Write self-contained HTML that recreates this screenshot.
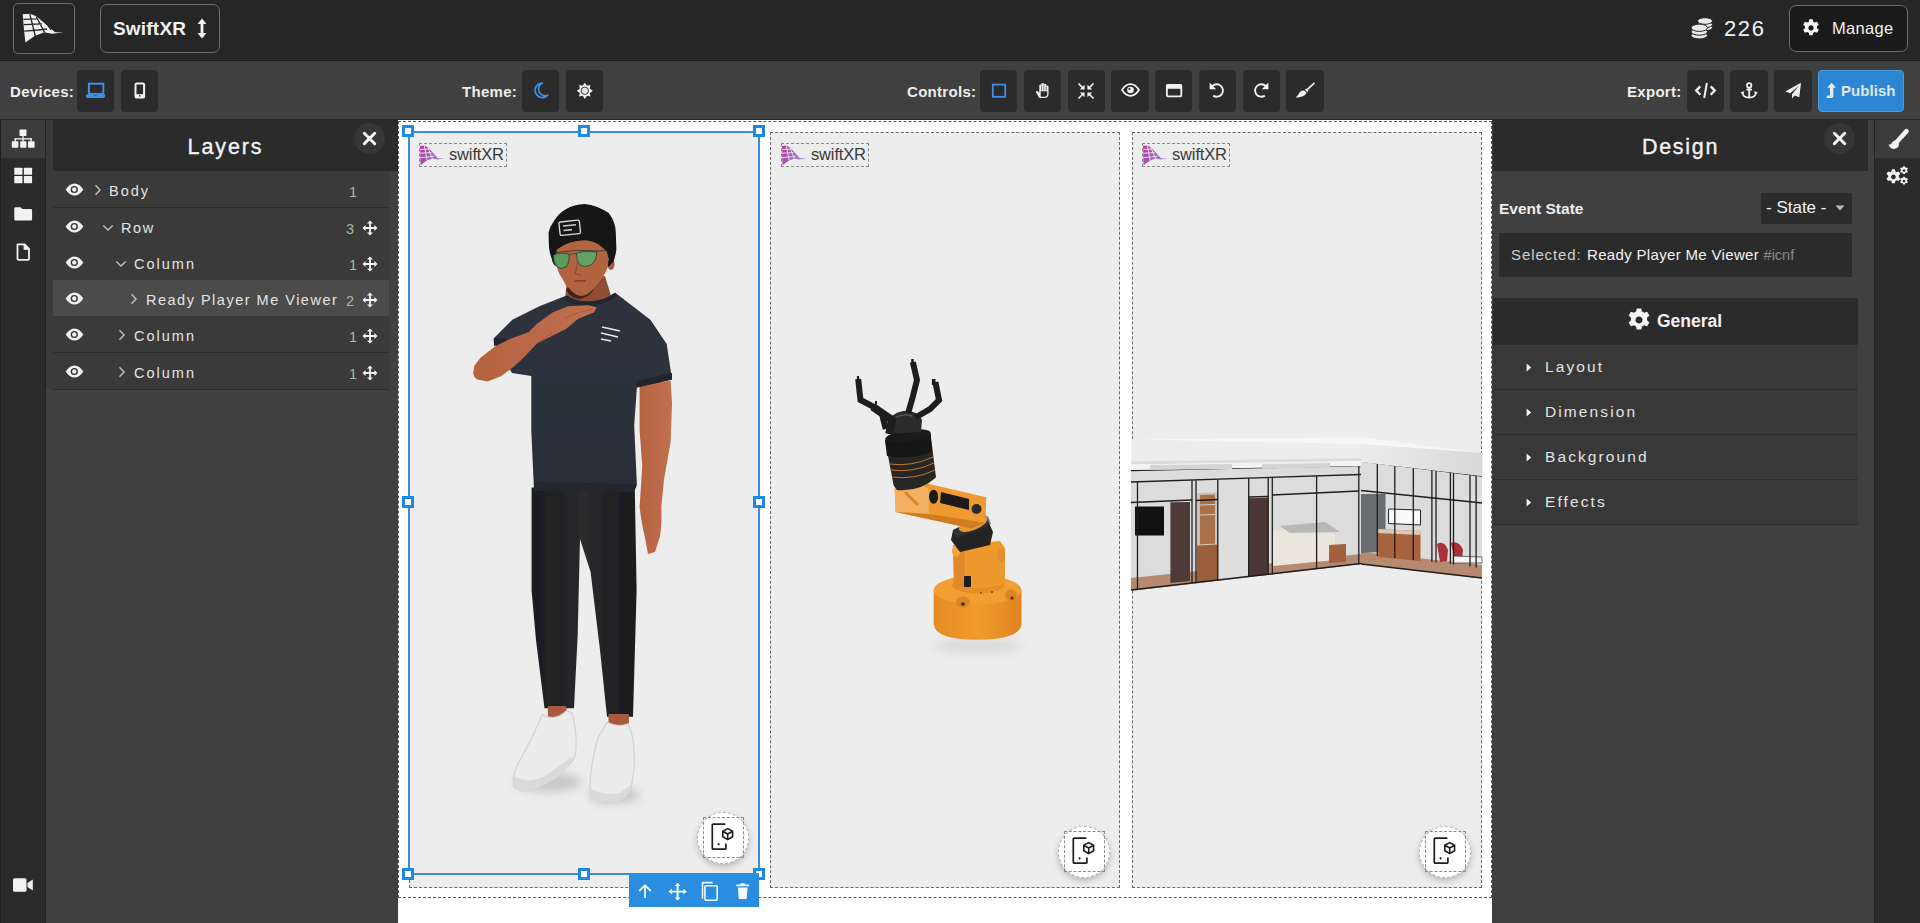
<!DOCTYPE html>
<html><head><meta charset="utf-8">
<style>
*{box-sizing:border-box;margin:0;padding:0}
html,body{width:1920px;height:923px;overflow:hidden;background:#404040;font-family:"Liberation Sans",sans-serif;color:#eee}
.a{position:absolute}
svg.a{overflow:visible}
#top{left:0;top:0;width:1920px;height:61px;background:#262626;border-bottom:1px solid #1c1c1c}
#tb{left:0;top:61px;width:1920px;height:58px;background:#404040}
.lbl{position:absolute;font-weight:bold;font-size:15px;color:#eee;top:82.5px;letter-spacing:0.3px}
.btn{position:absolute;top:70px;width:37px;height:42px;background:#2b2b2b;border-radius:4px}
#lsb{left:0;top:120px;width:46px;height:803px;background:#2b2b2b;border-right:1px solid #232323}
#lstrip{left:46px;top:120px;width:7px;height:269px;background:#3a3a3a}
#lp{left:53px;top:120px;width:345px;height:803px;background:transparent}
.ph{position:absolute;left:0;top:0;width:100%;height:51px;background:#2b2b2b}
.ph .t{position:absolute;top:15px;font-size:21.5px;letter-spacing:1.9px;color:#f4f4f4;width:100%;text-align:center;-webkit-text-stroke:0.35px #f4f4f4}
.close{position:absolute;width:31px;height:31px;border-radius:50%;background:#363636}
.row{position:absolute;left:0;width:336px;height:37px;background:#3a3a3a;border-bottom:1px solid #2d2d2d}
.row .n{position:absolute;top:11.5px;font-size:14.5px;letter-spacing:2px;color:#e4e4e4}
.row .c{position:absolute;top:12.5px;font-size:14.5px;color:#a3bf9a}
#canvas{left:398px;top:120px;width:1094px;height:803px;background:#fff}
#dp{left:1493px;top:120px;width:381px;height:803px;background:#404040}
#rsb{left:1874px;top:120px;width:46px;height:803px;background:#2b2b2b;border-left:1px solid #232323}
.drow{position:absolute;left:0;width:365px;height:45px;background:#383838;border-bottom:1px solid #2b2b2b}
.drow .n{position:absolute;left:52px;top:13px;font-size:15.5px;letter-spacing:2.1px;color:#e4e4e4}
.col{position:absolute;background:#ededed;border:1px dashed #6a6a6a}
.logo{position:absolute;left:9px;top:10px;width:88px;height:24px;border:1px dashed #888}
.logo .tx{position:absolute;left:30px;top:1px;font-size:17px;color:#333;letter-spacing:-0.2px}
.ar{position:absolute;width:50px;height:50px;border-radius:50%;background:#fff;box-shadow:0 2px 6px rgba(0,0,0,0.25)}
</style></head><body>
<!-- TOP BAR -->
<div id="top" class="a">
  <div class="a" style="left:13px;top:3px;width:62px;height:51px;border:1px solid #6e6e6e;border-radius:5px"></div>
  <svg class="a" style="left:0;top:0" width="80" height="60">
    <path d="M22.7 14.3 L30.2 13.7 L36.7 16.5 L48.6 26.7 L55.1 32.2 L63.3 32.4 L51.9 33.8 L44.3 32.2 L34.6 35.9 L25.4 42.4 L24 30 Z" fill="#f0f0f0"/>
    <path d="M29.7 13.7 L35.3 36 M36.2 16.5 L44.5 32.4 M23.5 19.3 L36.8 18.8 M23.8 24.7 L42 23.8 M24.2 31.2 L38 30 L47 29 M47 24 L51 30" stroke="#262626" stroke-width="1.3" fill="none"/>
  </svg>
  <div class="a" style="left:100px;top:4px;width:120px;height:49px;border:1px solid #6e6e6e;border-radius:7px"></div>
  <div class="a" style="left:113px;top:18px;font-weight:bold;font-size:19px;color:#f2f2f2;letter-spacing:0.2px">SwiftXR</div>
  <svg class="a" style="left:196px;top:18px" width="12" height="21" viewBox="0 0 12 21">
    <path d="M6 0.5 L10.5 6 L7.4 6 L7.4 15 L10.5 15 L6 20.5 L1.5 15 L4.6 15 L4.6 6 L1.5 6 Z" fill="#f2f2f2"/>
  </svg>
  <svg class="a" style="left:1690px;top:16px" width="24" height="24" viewBox="0 0 24 24">
    <g fill="#eaeaea" stroke="#262626" stroke-width="1">
      <ellipse cx="15" cy="11.5" rx="7.5" ry="3.2"/>
      <ellipse cx="15" cy="8.5" rx="7.5" ry="3.2"/>
      <ellipse cx="15" cy="5" rx="7.5" ry="3.3"/>
      <ellipse cx="9.3" cy="19.5" rx="8.2" ry="3.4"/>
      <ellipse cx="9.3" cy="15.8" rx="8.2" ry="3.4"/>
      <ellipse cx="9.3" cy="11.8" rx="8.2" ry="3.6"/>
    </g>
  </svg>
  <div class="a" style="left:1724px;top:16px;font-size:22px;letter-spacing:1.6px;color:#f2f2f2">226</div>
  <div class="a" style="left:1789px;top:5px;width:119px;height:47px;border:1px solid #6e6e6e;border-radius:7px;background:#1b1b1b"></div>
  <svg class="a" style="left:1802px;top:19px" width="18" height="18" viewBox="0 0 18 18">
    <path id="cog" d="M7.3 0.3h3.4l0.5 2.4a6.6 6.6 0 0 1 1.6 0.9l2.3-0.8 1.7 2.9-1.8 1.6a6.6 6.6 0 0 1 0 1.9l1.8 1.6-1.7 2.9-2.3-0.8a6.6 6.6 0 0 1-1.6 0.9l-0.5 2.4H7.3l-0.5-2.4a6.6 6.6 0 0 1-1.6-0.9l-2.3 0.8-1.7-2.9 1.8-1.6a6.6 6.6 0 0 1 0-1.9L1.2 5.7l1.7-2.9 2.3 0.8a6.6 6.6 0 0 1 1.6-0.9zM9 6.3a2.7 2.7 0 1 0 0.01 0z" fill="#f4f4f4" fill-rule="evenodd"/>
  </svg>
  <div class="a" style="left:1832px;top:19px;font-size:16.5px;color:#f2f2f2;letter-spacing:0.3px">Manage</div>
</div>
<!-- TOOLBAR -->
<div id="tb" class="a"></div>
<div class="lbl" style="left:10px">Devices:</div>
<div class="btn" style="left:77px"></div>
<svg class="a" style="left:85px;top:82px" width="21" height="17" viewBox="0 0 21 17">
  <rect x="3.9" y="1.7" width="14.4" height="10.2" fill="none" stroke="#3d8fe8" stroke-width="2"/>
  <path d="M1 12.6 H9 L9.6 13.4 H11.6 L12.2 12.6 H20 V14.5 Q20 15.9 18.6 15.9 H2.4 Q1 15.9 1 14.5Z" fill="#3d8fe8"/>
</svg>
<div class="btn" style="left:121px"></div>
<svg class="a" style="left:134px;top:82px" width="12" height="17" viewBox="0 0 12 17">
  <rect x="1.5" y="1.4" width="8.6" height="14.2" rx="1.2" fill="none" stroke="#f2f2f2" stroke-width="2"/>
  <rect x="1.5" y="12.2" width="8.6" height="3.4" fill="#f2f2f2"/>
  <circle cx="5.8" cy="13.9" r="0.8" fill="#2b2b2b"/>
</svg>
<div class="lbl" style="left:462px">Theme:</div>
<div class="btn" style="left:522px"></div>
<svg class="a" style="left:532px;top:81px" width="18" height="19" viewBox="0 0 18 19">
  <path d="M10.5 2 A7.3 7.3 0 1 0 15.8 14.2 A6 6 0 0 1 10.5 2 Z" fill="none" stroke="#3d8fe8" stroke-width="1.7" stroke-linejoin="round"/>
</svg>
<div class="btn" style="left:566px"></div>
<svg class="a" style="left:576px;top:82px" width="18" height="18" viewBox="0 0 18 18">
  <path d="M8.8 0.7 L10.9 3.8 L14.5 3.1 L13.8 6.7 L16.9 8.8 L13.8 10.9 L14.5 14.5 L10.9 13.8 L8.8 16.9 L6.7 13.8 L3.1 14.5 L3.8 10.9 L0.7 8.8 L3.8 6.7 L3.1 3.1 L6.7 3.8 Z" fill="#f2f2f2"/>
  <circle cx="8.8" cy="8.8" r="3.7" fill="#dde3ea" stroke="#3a3a3a" stroke-width="1"/>
</svg>
<div class="lbl" style="left:907px">Controls:</div>
<div class="btn" style="left:980px"></div>
<svg class="a" style="left:990px;top:82px" width="18" height="18"><rect x="2.8" y="2.6" width="12.4" height="12.2" fill="none" stroke="#3d8fe8" stroke-width="1.8"/></svg>
<div class="btn" style="left:1024px"></div>
<svg class="a" style="left:1034px;top:82px" width="18" height="18" viewBox="0 0 18 18">
  <path d="M5 15.5 L2.2 10.8 Q1.5 9.5 2.6 9 Q3.6 8.6 4.4 9.7 L5.3 10.9 V3.6 Q5.3 2.4 6.5 2.4 Q7.5 2.4 7.5 3.6 V2.2 Q7.5 1 8.7 1 Q9.9 1 9.9 2.2 V2.8 Q9.9 1.8 11 1.8 Q12.2 1.8 12.2 3 V4.4 Q12.2 3.4 13.3 3.4 Q14.5 3.4 14.5 4.6 V12 Q14.5 15.6 11.4 16 H6.2 Z" fill="#f2f2f2"/>
  <path d="M6.7 9.3 H13.2 V12.6 Q13.2 14.7 11.2 14.7 H6.8 L6.7 14.6Z" fill="#2b2b2b"/>
  <path d="M7.5 3.8V8.6 M9.9 3V8.6 M12.2 4.5V8.6" stroke="#2b2b2b" stroke-width="0.6"/>
</svg>
<div class="btn" style="left:1068px"></div>
<svg class="a" style="left:1077px;top:82px" width="18" height="18" viewBox="0 0 18 18">
  <g stroke="#f2f2f2" stroke-width="1.7" stroke-linecap="butt">
    <path d="M1.5 1.5 L6.5 6.5 M16.5 1.5 L11.5 6.5 M1.5 16.5 L6.5 11.5 M16.5 16.5 L11.5 11.5"/>
  </g>
  <g fill="#f2f2f2">
    <path d="M7.6 7.6 H2.8 L7.6 2.8Z M10.4 7.6 H15.2 L10.4 2.8Z M7.6 10.4 H2.8 L7.6 15.2Z M10.4 10.4 H15.2 L10.4 15.2Z"/>
  </g>
</svg>
<div class="btn" style="left:1111px;width:38px"></div>
<svg class="a" style="left:1121px;top:83px" width="19" height="14" viewBox="0 0 19 14">
  <path d="M1 7 Q4.8 1.2 9.5 1.2 Q14.2 1.2 18 7 Q14.2 12.8 9.5 12.8 Q4.8 12.8 1 7Z" fill="none" stroke="#f2f2f2" stroke-width="1.8"/>
  <circle cx="9.5" cy="7" r="3.3" fill="#f2f2f2"/>
  <circle cx="8.4" cy="6" r="1.1" fill="#2b2b2b"/>
</svg>
<div class="btn" style="left:1155px"></div>
<svg class="a" style="left:1165px;top:82px" width="18" height="17" viewBox="0 0 18 17">
  <rect x="1.9" y="2.8" width="14.4" height="11.5" rx="1" fill="none" stroke="#f2f2f2" stroke-width="1.8"/>
  <rect x="1.5" y="2.4" width="15.2" height="4.4" fill="#f2f2f2"/>
</svg>
<div class="btn" style="left:1199px"></div>
<svg class="a" style="left:1208px;top:81px" width="18" height="18" viewBox="0 0 18 18">
  <path d="M4.3 5.2 A6.2 6.2 0 1 1 5.2 14.6" fill="none" stroke="#f2f2f2" stroke-width="1.9"/>
  <path d="M1.6 1.6 V8.2 H8.2Z" fill="#f2f2f2"/>
</svg>
<div class="btn" style="left:1243px"></div>
<svg class="a" style="left:1252px;top:81px" width="18" height="18" viewBox="0 0 18 18">
  <path d="M13.7 5.2 A6.2 6.2 0 1 0 12.8 14.6" fill="none" stroke="#f2f2f2" stroke-width="1.9"/>
  <path d="M16.4 1.6 V8.2 H9.8Z" fill="#f2f2f2"/>
</svg>
<div class="btn" style="left:1286px;width:38px"></div>
<svg class="a" style="left:1295px;top:82px" width="20" height="17" viewBox="0 0 20 17">
  <path d="M19.5 0.8 L12.2 7.6" stroke="#f2f2f2" stroke-width="1.6"/>
  <path d="M11.2 6.4 L13.6 8.8 L12.3 10.1 L9.9 7.7Z" fill="#f2f2f2"/>
  <path d="M9.2 8.4 L11.6 10.8 Q9.5 15.5 0.6 15.6 Q3.2 13.8 4.5 10.6 Q5.8 8.2 9.2 8.4Z" fill="#f2f2f2"/>
</svg>
<div class="lbl" style="left:1627px">Export:</div>
<div class="btn" style="left:1687px"></div>
<svg class="a" style="left:1695px;top:82px" width="21" height="17" viewBox="0 0 21 17">
  <path d="M5.3 4.4 L1.2 8.6 L5.3 12.8" fill="none" stroke="#f2f2f2" stroke-width="2.3"/>
  <path d="M15.7 4.4 L19.8 8.6 L15.7 12.8" fill="none" stroke="#f2f2f2" stroke-width="2.3"/>
  <path d="M11.9 1 L9.2 16" stroke="#f2f2f2" stroke-width="2"/>
</svg>
<div class="btn" style="left:1730px;width:38px"></div>
<svg class="a" style="left:1740px;top:82px" width="19" height="17" viewBox="0 0 19 17">
  <circle cx="9.2" cy="3.4" r="2.2" fill="none" stroke="#f2f2f2" stroke-width="1.8"/>
  <path d="M9.2 5.5 V15.3 M6.4 7.6 H12" stroke="#f2f2f2" stroke-width="1.8"/>
  <path d="M2.4 10.5 Q3 15.6 9.2 15.6 Q15.4 15.6 16 10.5" fill="none" stroke="#f2f2f2" stroke-width="1.8"/>
  <path d="M0.5 10.3 L4.3 9.2 L3.2 12.9Z M17.9 10.3 L14.1 9.2 L15.2 12.9Z" fill="#f2f2f2"/>
</svg>
<div class="btn" style="left:1774px;width:38px"></div>
<svg class="a" style="left:1784px;top:82px" width="18" height="17" viewBox="0 0 18 17">
  <path d="M17 0.8 L1.2 9.5 L6.2 11.3 L15 3.4 L8 12.2 V16.4 L10.6 13.4 L15.3 15.3Z" fill="#f2f2f2"/>
</svg>
<div class="btn" style="left:1818px;width:86px;background:#2d86d4;border:1px solid #4a9de0"></div>
<svg class="a" style="left:1825px;top:82px" width="12" height="17" viewBox="0 0 12 17">
  <path d="M6.6 0.7 L11 5.8 H8.3 V14.2 Q8.3 16 6.5 16 H1.2 L2.6 13.4 H5 V5.8 H2.2Z" fill="#e6eef5"/>
</svg>
<div class="a" style="left:1841px;top:82px;font-weight:bold;font-size:15px;color:#dfe8f0;letter-spacing:0.05px">Publish</div>
<div class="a" style="left:0;top:119px;width:1920px;height:1px;background:#262626"></div>

<!-- LEFT SIDEBAR -->
<div id="lsb" class="a">
  <div class="a" style="left:0;top:0;width:45px;height:38px;background:#3b3b3b"></div>
  <svg class="a" style="left:0;top:0" width="45" height="150" viewBox="0 0 45 150">
    <g fill="#f2f2f2">
      <rect x="19.5" y="9.5" width="7" height="6.5" rx="0.8"/>
      <rect x="11.8" y="21.3" width="6.6" height="6.4" rx="0.8"/>
      <rect x="20.2" y="21.3" width="6.2" height="6.4" rx="0.8"/>
      <rect x="28" y="21.3" width="6.6" height="6.4" rx="0.8"/>
      <rect x="22.4" y="15.8" width="1.3" height="5.6"/>
      <rect x="14.6" y="18.2" width="17.2" height="1.3"/>
      <rect x="14.6" y="18.2" width="1.3" height="3.2"/>
      <rect x="30.5" y="18.2" width="1.3" height="3.2"/>
      <rect x="14.3" y="47.7" width="8.2" height="7.1" rx="0.6"/>
      <rect x="23.9" y="47.7" width="8.2" height="7.1" rx="0.6"/>
      <rect x="14.3" y="56.1" width="8.2" height="7.1" rx="0.6"/>
      <rect x="23.9" y="56.1" width="8.2" height="7.1" rx="0.6"/>
      <path d="M14.3 88.4 Q14.3 87.2 15.5 87.2 H20.6 L22.4 89 H30.9 Q32.1 89 32.1 90.2 V99.2 Q32.1 100.4 30.9 100.4 H15.5 Q14.3 100.4 14.3 99.2Z"/>
    </g>
    <path d="M17.5 124.4 H24.6 L29 128.8 V138.8 Q29 139.8 28 139.8 H18.5 Q17.5 139.8 17.5 138.8Z" fill="none" stroke="#f2f2f2" stroke-width="1.8" stroke-linejoin="round"/>
    <path d="M24.2 124.4 V129.2 H29" fill="#f2f2f2" stroke="#f2f2f2" stroke-width="1.2"/>
  </svg>
  <svg class="a" style="left:12px;top:757px" width="22" height="16" viewBox="0 0 22 16">
    <rect x="1" y="1.2" width="13.5" height="13.6" rx="1.6" fill="#f2f2f2"/>
    <path d="M15.5 6 L20.8 2.4 V13.6 L15.5 10Z" fill="#f2f2f2"/>
  </svg>
</div>
<div id="lstrip" class="a"></div>
<div class="a" style="left:0;top:120px;width:1px;height:803px;background:#1f1f1f"></div>
<div id="lp" class="a">
  <div class="ph"><div class="t" style="left:0">Layers</div>
    <div class="close" style="left:301px;top:3px"></div>
    <svg class="a" style="left:309px;top:11px" width="15" height="15" viewBox="0 0 15 15"><path d="M2.3 2.3 L12.7 12.7 M12.7 2.3 L2.3 12.7" stroke="#f6f6f6" stroke-width="3" stroke-linecap="round"/></svg>
  </div>
  <div class="row" style="top:51px"><svg class="a" style="left:12px;top:12px" width="19" height="13" viewBox="0 0 19 13"><path d="M0.7 6.5 Q4.5 0.4 9.5 0.4 Q14.5 0.4 18.3 6.5 Q14.5 12.6 9.5 12.6 Q4.5 12.6 0.7 6.5Z" fill="#f2f2f2"/><circle cx="9.3" cy="6.5" r="3.6" fill="#2f2f2f"/><circle cx="9.3" cy="6.5" r="2.2" fill="#f2f2f2"/></svg><svg class="a" style="left:40px;top:13px" width="10" height="12" viewBox="0 0 10 12"><path d="M2.5 1.3 L7 6 L2.5 10.7" fill="none" stroke="#bdbdbd" stroke-width="1.5"/></svg><span class="n" style="left:56px;letter-spacing:2.0px">Body</span><span class="c" style="left:296px">1</span></div>
  <div class="row" style="top:88px"><svg class="a" style="left:12px;top:12px" width="19" height="13" viewBox="0 0 19 13"><path d="M0.7 6.5 Q4.5 0.4 9.5 0.4 Q14.5 0.4 18.3 6.5 Q14.5 12.6 9.5 12.6 Q4.5 12.6 0.7 6.5Z" fill="#f2f2f2"/><circle cx="9.3" cy="6.5" r="3.6" fill="#2f2f2f"/><circle cx="9.3" cy="6.5" r="2.2" fill="#f2f2f2"/></svg><svg class="a" style="left:49px;top:15px" width="12" height="10" viewBox="0 0 12 10"><path d="M1.3 2.5 L6 7 L10.7 2.5" fill="none" stroke="#bdbdbd" stroke-width="1.5"/></svg><span class="n" style="left:68px;letter-spacing:1.6px">Row</span><span class="c" style="left:293px">3</span><svg class="a" style="left:309px;top:12px" width="16" height="16" viewBox="0 0 16 16"><path d="M8 0.5 L11 3.6 H8.9 V7.1 H12.4 V5 L15.5 8 L12.4 11 V8.9 H8.9 V12.4 H11 L8 15.5 L5 12.4 H7.1 V8.9 H3.6 V11 L0.5 8 L3.6 5 V7.1 H7.1 V3.6 H5Z" fill="#f2f2f2"/></svg></div>
  <div class="row" style="top:124px"><svg class="a" style="left:12px;top:12px" width="19" height="13" viewBox="0 0 19 13"><path d="M0.7 6.5 Q4.5 0.4 9.5 0.4 Q14.5 0.4 18.3 6.5 Q14.5 12.6 9.5 12.6 Q4.5 12.6 0.7 6.5Z" fill="#f2f2f2"/><circle cx="9.3" cy="6.5" r="3.6" fill="#2f2f2f"/><circle cx="9.3" cy="6.5" r="2.2" fill="#f2f2f2"/></svg><svg class="a" style="left:62px;top:15px" width="12" height="10" viewBox="0 0 12 10"><path d="M1.3 2.5 L6 7 L10.7 2.5" fill="none" stroke="#bdbdbd" stroke-width="1.5"/></svg><span class="n" style="left:81px;letter-spacing:2.0px">Column</span><span class="c" style="left:296px">1</span><svg class="a" style="left:309px;top:12px" width="16" height="16" viewBox="0 0 16 16"><path d="M8 0.5 L11 3.6 H8.9 V7.1 H12.4 V5 L15.5 8 L12.4 11 V8.9 H8.9 V12.4 H11 L8 15.5 L5 12.4 H7.1 V8.9 H3.6 V11 L0.5 8 L3.6 5 V7.1 H7.1 V3.6 H5Z" fill="#f2f2f2"/></svg></div>
  <div class="row" style="top:160px;background:#4b4b4b"><svg class="a" style="left:12px;top:12px" width="19" height="13" viewBox="0 0 19 13"><path d="M0.7 6.5 Q4.5 0.4 9.5 0.4 Q14.5 0.4 18.3 6.5 Q14.5 12.6 9.5 12.6 Q4.5 12.6 0.7 6.5Z" fill="#f2f2f2"/><circle cx="9.3" cy="6.5" r="3.6" fill="#2f2f2f"/><circle cx="9.3" cy="6.5" r="2.2" fill="#f2f2f2"/></svg><svg class="a" style="left:76px;top:13px" width="10" height="12" viewBox="0 0 10 12"><path d="M2.5 1.3 L7 6 L2.5 10.7" fill="none" stroke="#bdbdbd" stroke-width="1.5"/></svg><span class="n" style="left:93px;letter-spacing:1.5px">Ready Player Me Viewer</span><span class="c" style="left:293px">2</span><svg class="a" style="left:309px;top:12px" width="16" height="16" viewBox="0 0 16 16"><path d="M8 0.5 L11 3.6 H8.9 V7.1 H12.4 V5 L15.5 8 L12.4 11 V8.9 H8.9 V12.4 H11 L8 15.5 L5 12.4 H7.1 V8.9 H3.6 V11 L0.5 8 L3.6 5 V7.1 H7.1 V3.6 H5Z" fill="#f2f2f2"/></svg></div>
  <div class="row" style="top:196px"><svg class="a" style="left:12px;top:12px" width="19" height="13" viewBox="0 0 19 13"><path d="M0.7 6.5 Q4.5 0.4 9.5 0.4 Q14.5 0.4 18.3 6.5 Q14.5 12.6 9.5 12.6 Q4.5 12.6 0.7 6.5Z" fill="#f2f2f2"/><circle cx="9.3" cy="6.5" r="3.6" fill="#2f2f2f"/><circle cx="9.3" cy="6.5" r="2.2" fill="#f2f2f2"/></svg><svg class="a" style="left:64px;top:13px" width="10" height="12" viewBox="0 0 10 12"><path d="M2.5 1.3 L7 6 L2.5 10.7" fill="none" stroke="#bdbdbd" stroke-width="1.5"/></svg><span class="n" style="left:81px;letter-spacing:2.0px">Column</span><span class="c" style="left:296px">1</span><svg class="a" style="left:309px;top:12px" width="16" height="16" viewBox="0 0 16 16"><path d="M8 0.5 L11 3.6 H8.9 V7.1 H12.4 V5 L15.5 8 L12.4 11 V8.9 H8.9 V12.4 H11 L8 15.5 L5 12.4 H7.1 V8.9 H3.6 V11 L0.5 8 L3.6 5 V7.1 H7.1 V3.6 H5Z" fill="#f2f2f2"/></svg></div>
  <div class="row" style="top:233px"><svg class="a" style="left:12px;top:12px" width="19" height="13" viewBox="0 0 19 13"><path d="M0.7 6.5 Q4.5 0.4 9.5 0.4 Q14.5 0.4 18.3 6.5 Q14.5 12.6 9.5 12.6 Q4.5 12.6 0.7 6.5Z" fill="#f2f2f2"/><circle cx="9.3" cy="6.5" r="3.6" fill="#2f2f2f"/><circle cx="9.3" cy="6.5" r="2.2" fill="#f2f2f2"/></svg><svg class="a" style="left:64px;top:13px" width="10" height="12" viewBox="0 0 10 12"><path d="M2.5 1.3 L7 6 L2.5 10.7" fill="none" stroke="#bdbdbd" stroke-width="1.5"/></svg><span class="n" style="left:81px;letter-spacing:2.0px">Column</span><span class="c" style="left:296px">1</span><svg class="a" style="left:309px;top:12px" width="16" height="16" viewBox="0 0 16 16"><path d="M8 0.5 L11 3.6 H8.9 V7.1 H12.4 V5 L15.5 8 L12.4 11 V8.9 H8.9 V12.4 H11 L8 15.5 L5 12.4 H7.1 V8.9 H3.6 V11 L0.5 8 L3.6 5 V7.1 H7.1 V3.6 H5Z" fill="#f2f2f2"/></svg></div>
</div>

<!-- CANVAS -->
<div id="canvas" class="a"></div>
<div class="a" style="left:398px;top:121px;width:1094px;height:777px;border:1px dashed #5a5a5a"></div>
<div class="col" style="left:409px;top:132px;width:350px;height:756px"></div>
<div class="col" style="left:770px;top:132px;width:350px;height:756px"></div>
<div class="col" style="left:1132px;top:132px;width:350px;height:756px"></div>
<div class="a" style="left:419px;top:143px;width:88px;height:24px;border:1px dashed #8a8a8a"></div>
<svg class="a" style="left:419px;top:143px" width="30" height="24" viewBox="0 0 30 24">
  <defs><linearGradient id="lg419" x1="0" y1="0" x2="1" y2="0.3"><stop offset="0" stop-color="#b8389a"/><stop offset="0.45" stop-color="#a45ab8"/><stop offset="1" stop-color="#8f8fd0"/></linearGradient></defs>
  <path d="M1 3 L5.5 2.6 L9 4.6 L15.5 11.6 L19 15.2 L26 15.6 L18.5 16.4 L13.5 15.6 L8 17.4 L1.5 22.2 Z" fill="url(#lg419)"/>
  <path d="M5.3 2.6 L8.2 17.6 M9 4.6 L13.4 15.8 M1.2 6.4 L9.8 6.1 M1.3 10.2 L12.6 9.6 M1.4 14.6 L9.8 13.8 L15 13.2" stroke="#f3e6f2" stroke-width="0.9" fill="none"/>
</svg>
<div class="a" style="left:449px;top:145px;font-size:16.5px;color:#3a3a3a;letter-spacing:-0.15px">swiftXR</div>
<div class="a" style="left:781px;top:143px;width:88px;height:24px;border:1px dashed #8a8a8a"></div>
<svg class="a" style="left:781px;top:143px" width="30" height="24" viewBox="0 0 30 24">
  <defs><linearGradient id="lg781" x1="0" y1="0" x2="1" y2="0.3"><stop offset="0" stop-color="#b8389a"/><stop offset="0.45" stop-color="#a45ab8"/><stop offset="1" stop-color="#8f8fd0"/></linearGradient></defs>
  <path d="M1 3 L5.5 2.6 L9 4.6 L15.5 11.6 L19 15.2 L26 15.6 L18.5 16.4 L13.5 15.6 L8 17.4 L1.5 22.2 Z" fill="url(#lg781)"/>
  <path d="M5.3 2.6 L8.2 17.6 M9 4.6 L13.4 15.8 M1.2 6.4 L9.8 6.1 M1.3 10.2 L12.6 9.6 M1.4 14.6 L9.8 13.8 L15 13.2" stroke="#f3e6f2" stroke-width="0.9" fill="none"/>
</svg>
<div class="a" style="left:811px;top:145px;font-size:16.5px;color:#3a3a3a;letter-spacing:-0.15px">swiftXR</div>
<div class="a" style="left:1142px;top:143px;width:88px;height:24px;border:1px dashed #8a8a8a"></div>
<svg class="a" style="left:1142px;top:143px" width="30" height="24" viewBox="0 0 30 24">
  <defs><linearGradient id="lg1142" x1="0" y1="0" x2="1" y2="0.3"><stop offset="0" stop-color="#b8389a"/><stop offset="0.45" stop-color="#a45ab8"/><stop offset="1" stop-color="#8f8fd0"/></linearGradient></defs>
  <path d="M1 3 L5.5 2.6 L9 4.6 L15.5 11.6 L19 15.2 L26 15.6 L18.5 16.4 L13.5 15.6 L8 17.4 L1.5 22.2 Z" fill="url(#lg1142)"/>
  <path d="M5.3 2.6 L8.2 17.6 M9 4.6 L13.4 15.8 M1.2 6.4 L9.8 6.1 M1.3 10.2 L12.6 9.6 M1.4 14.6 L9.8 13.8 L15 13.2" stroke="#f3e6f2" stroke-width="0.9" fill="none"/>
</svg>
<div class="a" style="left:1172px;top:145px;font-size:16.5px;color:#3a3a3a;letter-spacing:-0.15px">swiftXR</div>
<!--MODELS-->
<svg class="a" style="left:398px;top:120px" width="1094" height="803" viewBox="398 120 1094 803">
<defs>
  <filter id="blur4" x="-50%" y="-50%" width="200%" height="200%"><feGaussianBlur stdDeviation="5"/></filter>
  <filter id="blur2" x="-50%" y="-50%" width="200%" height="200%"><feGaussianBlur stdDeviation="1.2"/></filter>
  <filter id="blur1" x="-20%" y="-20%" width="140%" height="140%"><feGaussianBlur stdDeviation="0.6"/></filter>
  <linearGradient id="skin" x1="0" y1="0" x2="1" y2="0"><stop offset="0" stop-color="#b5623f"/><stop offset="1" stop-color="#c07050"/></linearGradient>
  <linearGradient id="pants" x1="0" y1="0" x2="1" y2="0"><stop offset="0" stop-color="#1c1c1e"/><stop offset="0.5" stop-color="#2a2a2c"/><stop offset="1" stop-color="#1a1a1c"/></linearGradient>
  <linearGradient id="shirt" x1="0" y1="0" x2="0" y2="1"><stop offset="0" stop-color="#2e333e"/><stop offset="1" stop-color="#2a2e38"/></linearGradient>
  <linearGradient id="orange" x1="0" y1="0" x2="1" y2="0"><stop offset="0" stop-color="#e48a22"/><stop offset="0.5" stop-color="#f09c2c"/><stop offset="1" stop-color="#e08420"/></linearGradient>
  <linearGradient id="roofR" x1="0" y1="0" x2="1" y2="0"><stop offset="0" stop-color="#ececec"/><stop offset="1" stop-color="#d8d8d8"/></linearGradient>
</defs>
<g id="avatar">
  <!-- right arm -->
  <path d="M636.9 384.8 L670.7 380.7 L672 403.8 L670.7 441.7 L664 479.6 L661.3 506.7 Q662 525 660 536 L655 552 L648 554 L645 538 Q641 520 639.6 506.7 L642.3 466 L639.6 430.8 L639.6 387.5Z" fill="url(#skin)" filter="url(#blur1)"/>
  <!-- pants -->
  <path d="M531.6 487.4 L634.8 489.2 L636.6 590.6 L633 716.8 L607 716.8 L600 650 L590.6 572 L580 539 L577.7 634.8 L574 708.3 L544.5 708.3 L536 640 L531.6 590.6Z" fill="url(#pants)" filter="url(#blur1)"/>
  <ellipse cx="548" cy="782" rx="34" ry="10" fill="#b0b0b0" opacity="0.6" filter="url(#blur4)"/>
  <ellipse cx="614" cy="795" rx="26" ry="9" fill="#b0b0b0" opacity="0.6" filter="url(#blur4)"/>
  <path d="M547.9 706 L566.2 706 L568 722.4 L547.9 722.4Z" fill="#a85a3a"/>
  <path d="M608.5 714 L628.9 714 L628.9 726.6 L608.5 726.6Z" fill="#a85a3a"/>
  <!-- shoes -->
  <path d="M542.3 714.6 Q555 722 566.2 711 L571.8 712.5 Q577 730 576 749.2 Q575.5 756 573.2 760.4 L560.6 774.5 Q548 783 532.4 790 Q524 792 518.3 790 Q512 786 513.4 780 Q514 772 517 766 L532.4 736.5Z" fill="#ebebeb" stroke="#d2d2d2" stroke-width="1.2" filter="url(#blur1)"/>
  <path d="M515 777 Q528 784 545 776 L572 757 L573.2 760.4 L560.6 774.5 Q548 783 532.4 790 Q524 792 518.3 790 Q512 786 513.4 780Z" fill="#dadada"/>
  <path d="M607 722.4 Q618 728 628.2 723.8 Q633 735 633.8 746.3 L634.5 763.2 Q633 778 631 788.6 Q627 797 619.7 801.3 L598.6 802.7 Q592 799 590.1 794.2 Q589.5 780 591.5 768.9 Q594 750 598.6 736.5Z" fill="#ececec" stroke="#d2d2d2" stroke-width="1.2" filter="url(#blur1)"/>
  <path d="M590.5 788 Q604 796 620 793 L632 784 L631 788.6 Q627 797 619.7 801.3 L598.6 802.7 Q592 799 590.1 794.2Z" fill="#dadada"/>
  <!-- neck -->
  <path d="M567 280 L605 276 L611 296 L588 304 L565 300Z" fill="#8f4d33"/>
  <!-- head -->
  <path d="M556.2 245 L557.4 268.9 Q559 274 562.2 278.4 L568.1 289.2 Q571 294 574.1 295.1 L581.3 296.3 Q587 295 592 290.4 L600.3 280.8 L606.3 271.3 L608.7 261.7 L607 240 L583 234 L560 238Z" fill="#b3633f" filter="url(#blur1)"/>
  <path d="M568 287 Q575 296 582 296 Q589 295 594 288 L592 292 Q586 299 578 299 Q570 297 566 290Z" fill="#3d251c"/>
  <path d="M574 281.5 Q580 280 586 281" stroke="#7a3a2a" stroke-width="1.3" fill="none"/>
  <path d="M578 262 L575 274 L581 275" stroke="#8a4a32" stroke-width="1" fill="none"/>
  <ellipse cx="611" cy="264" rx="3.5" ry="6" fill="#a85a3a"/>
  <!-- beanie -->
  <path d="M584.8 203.9 Q596.7 205.1 608.7 212.9 Q615.8 222 615.8 233.1 L616.4 249.8 Q615 258 613.4 261.7 L607.5 267.7 L608.7 259.4 Q608 254 606.3 251 Q601 246 598 243.9 Q590 240 583.6 240.3 Q575 241 569.3 242.7 Q561 246 556.8 249.8 L555.6 266.5 Q552 262 552 259.4 Q549.5 253 549 247.4 L548.5 233.1 Q550 226 553.8 221.2 Q559 213 565.8 209.3 Q574 204 584.8 203.9Z" fill="#141414" filter="url(#blur1)"/>
  <rect x="559.5" y="221" width="20.5" height="13.5" rx="1.5" fill="none" stroke="#dcdcdc" stroke-width="1.3" transform="rotate(-6 570 228)"/>
  <path d="M563 226 L576 224.8 M563.5 230.5 L572 229.6" stroke="#c8c8c8" stroke-width="1.6"/>
  <!-- glasses -->
  <path d="M553.5 255 Q560 252 569 254 Q570 262 566 267 Q561 270 557 267 Q553 262 553.5 255Z" fill="#5d9a5e" stroke="#2c3a2c" stroke-width="0.8"/>
  <path d="M576.5 253 Q586 250 596.5 252 Q597 260 591 265 Q585 268 580 265 Q576 260 576.5 253Z" fill="#64a264" stroke="#2c3a2c" stroke-width="0.8"/>
  <path d="M556 252.5 Q577 249 600 251 L606.3 250.5 M569 255 Q573 253 576.5 254" stroke="#3a3a3a" stroke-width="0.9" fill="none"/>
  <!-- shirt -->
  <path d="M566.5 295.4 Q590 309 615.2 292.7 L650.4 319.8 L666.7 344 L672 379.4 L636.9 387.5 L634.2 425.4 L636.9 485 L634.2 491.8 L534 490.4 L531.3 430.8 L531.3 376 L512 373 L494 343 L493.8 338.2 L512.3 319.8 L539.4 306.3Z" fill="url(#shirt)" filter="url(#blur1)"/>
  <path d="M566.5 295.4 Q590 309 615.2 292.7 L618 296 Q590 314 563 299Z" fill="#23272f"/>
  <path d="M534 482 L636 484 L634.2 491.8 L534 490.4Z" fill="#23262e"/>
  <path d="M636.9 381 L672 373 L672 379.4 L636.9 387.5Z" fill="#22252c"/>
  <path d="M493.8 338.2 L505 338 L509 341 L494 346Z" fill="#22252c"/>
  <!-- raised arm -->
  <path d="M473.2 373.2 Q474 378 477.4 379.4 L487.6 381.5 L501 376.3 L513.4 367 L522.6 358.8 L537 343.4 L549.4 337.2 L565.9 329 L578.2 318.7 L593.7 312.5 L596.8 307.4 L588.5 305.3 L568 306.3 L552.5 312.5 L537 323.8 L528.8 332.1 L509.3 339.3 L494.9 346.5 L480.4 357.8 L474.3 366Z" fill="url(#skin)" filter="url(#blur1)"/>
  <path d="M537 343.4 Q545 338 552 333 M565 318 Q578 312 592 309" stroke="#8a4530" stroke-width="0.9" fill="none" opacity="0.5"/>
  <!-- shirt logo -->
  <g fill="none" stroke="#e8e8e8" stroke-width="1.6">
    <path d="M602 327 L620 331 M601 333 L618 337 M601 339 L611 341"/>
  </g>
</g>
<g id="robot">
  <ellipse cx="978" cy="646" rx="44" ry="7" fill="#c0c0c0" opacity="0.45" filter="url(#blur4)"/>
  <!-- base -->
  <path d="M933.7 590 L933.7 624 Q935 639.8 977.6 639.8 Q1020 639.8 1021.5 624 L1021.5 590Z" fill="url(#orange)"/>
  <ellipse cx="977.6" cy="590" rx="43.9" ry="14.6" fill="#f0a032"/>
  <ellipse cx="978" cy="585" rx="26" ry="8.5" fill="#e48e24"/>
  <ellipse cx="963" cy="602" rx="6.9" ry="5.4" fill="#d98524"/>
  <circle cx="963" cy="604" r="1.8" fill="#3a2510"/>
  <ellipse cx="1010.8" cy="595" rx="5.8" ry="5.8" fill="#d98524"/>
  <circle cx="1012" cy="598" r="1.5" fill="#3a2510"/>
  <circle cx="981" cy="593" r="1" fill="#7a4a18"/><circle cx="992" cy="592" r="1" fill="#7a4a18"/>
  <!-- pillar -->
  <path d="M953 545 L1000 541 L1005 548 L1005 583 Q980 592 954 585Z" fill="#ec9a2c"/>
  <path d="M953 545 L965 552 L965 588 Q958 587 954 585Z" fill="#e0892a"/>
  <ellipse cx="956" cy="551" rx="4" ry="6" fill="#f0a540"/>
  <ellipse cx="1001" cy="555" rx="4" ry="7" fill="#e38f2c"/>
  <rect x="964" y="576" width="7" height="11" rx="1" fill="#1e1e1e"/>
  <!-- elbow joint -->
  <path d="M953 530 L985 514 L993 532 L990 545 L960 552 L951 540Z" fill="#232323"/>
  <path d="M953 531 Q972 524 988 516 L991 524 Q975 532 956 538Z" fill="#3a3a3a" opacity="0.6"/>
  <ellipse cx="973" cy="524" rx="15" ry="6" transform="rotate(-22 973 524)" fill="#e99a38"/>
  <!-- upper arm -->
  <path d="M915.1 480.7 L986.3 497.3 L985.4 522.7 L971.7 528.5 L895.6 512 L894.6 488.5Z" fill="#ee9a30"/>
  <path d="M894.6 488.5 L915.1 480.7 L928.8 489 L928.8 513.9 L895.6 512Z" fill="#f3b060"/>
  <path d="M895.6 512 L971.7 528.5 L985.4 522.7 L928.8 513.9Z" fill="#d27c22"/>
  <path d="M941 492 L969 499 L969 510 L940 503Z" fill="#1b1b1b"/>
  <ellipse cx="933.6" cy="496.7" rx="4.6" ry="7" fill="#1b1b1b"/>
  <circle cx="976.5" cy="509" r="5" fill="#2a2a2a"/>
  <path d="M905 492 L918 505" stroke="#d88628" stroke-width="2.5"/>
  <!-- wrist cylinder -->
  <path d="M885 440 L930.6 434 L936 477.5 Q920 492 896.8 490 L893.7 485.4Z" fill="#262626"/>
  <path d="M885 440 L930.6 434 L932 452 Q910 460 887 456Z" fill="#161616"/>
  <ellipse cx="908" cy="436" rx="23" ry="6" transform="rotate(-8 908 436)" fill="#1a1a1a"/>
  <path d="M889 464 Q912 467 933 457 M890 470 Q913 473 934 463 M892 477 Q914 480 935 470" stroke="#c8752a" stroke-width="1" fill="none"/>
  <!-- gripper -->
  <path d="M887 425 Q890 413 903 411 Q918 410 922 420 L921 432 L888 434Z" fill="#2b2b2b"/>
  <path d="M895 418 Q903 413 912 416" stroke="#5a5a5a" stroke-width="1.4" fill="none"/>
  <g stroke="#1d1d1d" stroke-linecap="square" stroke-linejoin="miter" fill="none">
    <path d="M858.5 382 L860.5 400 L874 407 L882 414 L885 426" stroke-width="6"/>
    <path d="M913.5 365 L917 380 L913 396 L909 410" stroke-width="6"/>
    <path d="M936 385 L939 400 L930 409 L918 416" stroke-width="6"/>
    <path d="M876 409 L892 420 L890 430" stroke-width="8"/>
  </g>
  <g stroke="#1d1d1d" stroke-width="2" fill="none">
    <path d="M858 376 V383 M912.5 359 V366 M934.5 379 V386 M876 401 V407"/>
  </g>
</g>
  <g stroke="#1c1c1c" stroke-width="2.2" fill="none">
    <path d="M858 377 V384 M912.5 359 V366 M933 379 V385"/>
  </g>
</g>
<g id="building">
  <!-- below-floor white is bg; walls -->
  <path d="M1131 464 L1361 459 L1482 474.5 L1482 578.5 L1361 564 L1131 591Z" fill="#dcdcdd"/>
  <!-- floor strips -->
  <path d="M1131 578 L1361 554 L1361 564 L1131 591Z" fill="#b58a70"/>
  <path d="M1361 552 L1482 565 L1482 578.5 L1361 564Z" fill="#b58a70"/>
  <!-- left facade interior -->
  <rect x="1135" y="506.5" width="29" height="29" fill="#111"/>
  <path d="M1170.4 502.3 L1190 502 L1190 581 L1170.4 583Z" fill="#4e3a36"/>
  <path d="M1197 493 L1218 492.5 L1218 580 L1197 582.5Z" fill="#c9c2bc"/><path d="M1200 495 L1215 494.5 L1215 545 L1200 546Z" fill="#a8714a"/><path d="M1197 545 L1218 544 L1218 580 L1197 582.5Z" fill="#9b5f3c"/>
  <path d="M1200 505 L1215 504.5 M1200 515 L1215 514.5 M1197 545 L1218 544" stroke="#d8ccc0" stroke-width="1"/>
  <path d="M1218 473.5 L1248.7 472.8 L1248.7 577 L1218 580.6Z" fill="#dedede"/>
  <path d="M1248.7 498.2 L1268.2 497.8 L1268.2 575 L1248.7 576.4Z" fill="#4b3733"/>
  <path d="M1273 531 L1300 528 L1335 534 L1335 560 L1273 566Z" fill="#ebe6dc"/>
  <path d="M1280 526 L1325 522 L1340 532 L1290 533Z" fill="#b8b8b8"/>
  <path d="M1329 545 L1346 544 L1346 562 L1329 563Z" fill="#a0613c"/>
  <!-- right facade interior -->
  <path d="M1361 494 L1385.5 494 L1385.5 551.7 L1361 553Z" fill="#6a6d70"/>
  <path d="M1388.6 509 L1420.5 510 L1420.5 525 L1388.6 523.5Z" fill="#fafafa" stroke="#222" stroke-width="1"/>
  <path d="M1378.3 529 L1420.5 531 L1420.5 561 L1378.3 557Z" fill="#a9623e"/>
  <path d="M1378.3 529 L1420.5 531 L1420.5 535 L1378.3 533Z" fill="#d8c8b8"/>
  <path d="M1437 544 Q1444 540 1448 550 L1447 561 L1440 562Z M1451 543 Q1459 540 1463 550 L1462 560 L1455 561Z" fill="#a8323c"/>
  <path d="M1453.5 556 L1482 557 L1482 563 L1453.5 563Z" fill="#f4f4f4" stroke="#333" stroke-width="0.7"/>
  <!-- frames left -->
  <g stroke="#1e1e1e" stroke-width="1.3" fill="none">
    <path d="M1131 470.5 L1361 465.5"/>
    <path d="M1131 482 L1361 474.5"/>
    <path d="M1131 502.5 L1192 500 M1196 500.5 L1218 499.5 M1248.7 497 L1268.2 496.5 M1272 495 L1359 491"/>
    <path d="M1137.5 482 V590 M1192 480.5 V583 M1196 480.5 V583 M1217.8 480 V581 M1248.7 478 V577 M1268.2 477.5 V575 M1272.3 477 V574.5 M1316.6 476 V569 M1358.8 459 V564.5"/>
    <path d="M1131 590 L1361 563.5"/>
  </g>
  <g stroke="#1e1e1e" stroke-width="1.3" fill="none">
    <path d="M1361 461 L1482 476"/>
    <path d="M1361 490.5 L1482 503"/>
    <path d="M1377.3 461 V556 M1394.8 463 V558 M1413.3 465.5 V560 M1431.9 468 V562 M1436 468.5 V562.5 M1450.4 470 V564 M1453.5 470.5 V564.5 M1470 472.5 V566.5 M1476.1 473.5 V567.5"/>
    <path d="M1361 564 L1482 578"/>
  </g>
  <!-- roof -->
  <path d="M1131.3 439.6 L1362.9 437.5 L1482.3 452.9 L1482.3 476 L1360.8 462 L1131.3 466Z" fill="#ededed"/>
  <path d="M1131.3 439.6 L1362.9 437.5 L1482.3 452.9 L1360.8 444 Z" fill="#f6f6f6"/>
  <path d="M1360.8 444 L1482.3 452.9 L1482.3 476 L1360.8 461Z" fill="url(#roofR)"/>
  <path d="M1131 461.5 L1361 458 L1361 461 L1131 464.5Z" fill="#dcdcdc"/>
  <path d="M1131 464.5 L1361 461 L1361 466 L1131 470Z" fill="#f4f4f4"/>
  <path d="M1150 465 L1232 464 L1232 469 L1150 470Z" fill="#d4d4d4"/>
  <path d="M1262 464 L1330 463 L1330 467.5 L1262 468.5Z" fill="#d4d4d4"/>
</g>
</svg>

<!--/MODELS-->
<div class="a" style="left:697px;top:812px;width:52px;height:52px;border-radius:50%;background:#fff;box-shadow:0 3px 6px rgba(0,0,0,0.22);border:1px dashed #b0b0b0"></div>
<div class="a" style="left:703px;top:817px;width:41px;height:41px;border:1px dashed #8c8c8c"></div>
<svg class="a" style="left:711px;top:823px" width="24" height="28" viewBox="0 0 24 28">
  <path d="M14.4 1.2 H2.3 Q1.3 1.2 1.3 2.2 V25.2 Q1.3 26.2 2.3 26.2 H13.9 Q14.9 26.2 14.9 25.2 V20.5" fill="none" stroke="#1e1e1e" stroke-width="1.7"/>
  <circle cx="7.6" cy="21.3" r="1.1" fill="#1e1e1e"/>
  <path d="M16.7 5.6 L21.6 8.3 V13.8 L16.7 16.6 L11.8 13.8 V8.3 Z M11.8 8.3 L16.7 11 L21.6 8.3 M16.7 11 V16.6" fill="none" stroke="#1e1e1e" stroke-width="1.6" stroke-linejoin="round"/>
</svg>
<div class="a" style="left:1058px;top:826px;width:52px;height:52px;border-radius:50%;background:#fff;box-shadow:0 3px 6px rgba(0,0,0,0.22);border:1px dashed #b0b0b0"></div>
<div class="a" style="left:1064px;top:831px;width:41px;height:41px;border:1px dashed #8c8c8c"></div>
<svg class="a" style="left:1072px;top:837px" width="24" height="28" viewBox="0 0 24 28">
  <path d="M14.4 1.2 H2.3 Q1.3 1.2 1.3 2.2 V25.2 Q1.3 26.2 2.3 26.2 H13.9 Q14.9 26.2 14.9 25.2 V20.5" fill="none" stroke="#1e1e1e" stroke-width="1.7"/>
  <circle cx="7.6" cy="21.3" r="1.1" fill="#1e1e1e"/>
  <path d="M16.7 5.6 L21.6 8.3 V13.8 L16.7 16.6 L11.8 13.8 V8.3 Z M11.8 8.3 L16.7 11 L21.6 8.3 M16.7 11 V16.6" fill="none" stroke="#1e1e1e" stroke-width="1.6" stroke-linejoin="round"/>
</svg>
<div class="a" style="left:1419px;top:826px;width:52px;height:52px;border-radius:50%;background:#fff;box-shadow:0 3px 6px rgba(0,0,0,0.22);border:1px dashed #b0b0b0"></div>
<div class="a" style="left:1425px;top:831px;width:41px;height:41px;border:1px dashed #8c8c8c"></div>
<svg class="a" style="left:1433px;top:837px" width="24" height="28" viewBox="0 0 24 28">
  <path d="M14.4 1.2 H2.3 Q1.3 1.2 1.3 2.2 V25.2 Q1.3 26.2 2.3 26.2 H13.9 Q14.9 26.2 14.9 25.2 V20.5" fill="none" stroke="#1e1e1e" stroke-width="1.7"/>
  <circle cx="7.6" cy="21.3" r="1.1" fill="#1e1e1e"/>
  <path d="M16.7 5.6 L21.6 8.3 V13.8 L16.7 16.6 L11.8 13.8 V8.3 Z M11.8 8.3 L16.7 11 L21.6 8.3 M16.7 11 V16.6" fill="none" stroke="#1e1e1e" stroke-width="1.6" stroke-linejoin="round"/>
</svg>
<div class="a" style="left:408px;top:131px;width:352px;height:744px;border:2px solid #3d8ad6"></div>
<div class="a" style="left:402px;top:125px;width:12px;height:12px;border:3px solid #1f88e0;background:#fff"></div><div class="a" style="left:578px;top:125px;width:12px;height:12px;border:3px solid #1f88e0;background:#fff"></div><div class="a" style="left:753px;top:125px;width:12px;height:12px;border:3px solid #1f88e0;background:#fff"></div>
<div class="a" style="left:402px;top:496px;width:12px;height:12px;border:3px solid #1f88e0;background:#fff"></div><div class="a" style="left:753px;top:496px;width:12px;height:12px;border:3px solid #1f88e0;background:#fff"></div>
<div class="a" style="left:402px;top:868px;width:12px;height:12px;border:3px solid #1f88e0;background:#fff"></div><div class="a" style="left:578px;top:868px;width:12px;height:12px;border:3px solid #1f88e0;background:#fff"></div><div class="a" style="left:753px;top:868px;width:12px;height:12px;border:3px solid #1f88e0;background:#fff"></div>
<div class="a" style="left:629px;top:873px;width:130px;height:34px;background:#2a8de0"></div>
<svg class="a" style="left:629px;top:873px" width="130" height="34" viewBox="0 0 130 34">
  <g fill="none" stroke="#f4f8fc" stroke-width="1.8">
    <path d="M16 25 V12.5 M10.2 18 L16 12.2 L21.8 18"/>
  </g>
  <path d="M48.6 9.7 L51.6 13 H49.6 V17.8 H54.4 V15.8 L57.7 18.6 L54.4 21.6 V19.6 H49.6 V24.4 H51.6 L48.6 27.6 L45.6 24.4 H47.6 V19.6 H42.8 V21.6 L39.5 18.6 L42.8 15.8 V17.8 H47.6 V13 H45.6Z" fill="#f4f8fc"/>
  <g fill="none" stroke="#f4f8fc" stroke-width="1.6">
    <path d="M73.5 25.5 V10.2 Q73.5 9.6 74.1 9.6 H83.6"/>
    <rect x="75.9" y="12.7" width="12.3" height="14.6" rx="1.2"/>
  </g>
  <path d="M107.3 11.4 H120 V13.2 H107.3Z M108.8 14.4 H118.6 L117.7 25.4 Q117.6 26 117 26 H110.4 Q109.8 26 109.7 25.4Z M111.5 10.3 H115.8 V11.4 H111.5Z" fill="#f4f8fc"/>
</svg>

<!-- DESIGN PANEL -->
<div id="dp" class="a">
  <div class="ph" style="width:375px"><div class="t" style="left:0;letter-spacing:1.7px">Design</div>
    <div class="close" style="left:331px;top:3px"></div>
    <svg class="a" style="left:339px;top:11px" width="15" height="15" viewBox="0 0 15 15"><path d="M2.3 2.3 L12.7 12.7 M12.7 2.3 L2.3 12.7" stroke="#f6f6f6" stroke-width="3" stroke-linecap="round"/></svg>
  </div>
  <div class="a" style="left:6px;top:80px;font-weight:bold;font-size:15.5px;color:#eee">Event State</div>
  <div class="a" style="left:268px;top:73px;width:91px;height:31px;background:#2b2b2b;border-radius:2px"></div>
  <div class="a" style="left:273px;top:78px;font-size:17px;letter-spacing:0px;color:#f2f2f2">- State -</div>
  <svg class="a" style="left:342px;top:85px" width="10" height="6" viewBox="0 0 10 6"><path d="M0.5 0.5 H9.5 L5 5.5Z" fill="#bbb"/></svg>
  <div class="a" style="left:6px;top:113px;width:353px;height:44px;background:#2b2b2b"></div>
  <div class="a" style="left:18px;top:126px;font-size:15px;letter-spacing:0.9px;color:#cfcfcf">Selected:</div>
  <div class="a" style="left:94px;top:126px;font-size:15px;letter-spacing:0.33px;color:#f2f2f2">Ready Player Me Viewer <span style="color:#8a8a8a;font-size:14.5px;letter-spacing:0">#icnf</span></div>
  <div class="a" style="left:0;top:178px;width:365px;height:47px;background:#2b2b2b"></div>
  <svg class="a" style="left:134px;top:188px" width="24" height="24" viewBox="0 0 18 18"><use href="#cog"/></svg>
  <div class="a" style="left:164px;top:191px;font-weight:bold;font-size:17.5px;color:#f2f2f2">General</div>
  <div class="drow" style="top:225px"><svg class="a" style="left:33px;top:18px" width="6" height="9" viewBox="0 0 6 9"><path d="M0.6 0.6 L5.2 4.5 L0.6 8.4Z" fill="#f2f2f2"/></svg><span class="n">Layout</span></div>
  <div class="drow" style="top:270px"><svg class="a" style="left:33px;top:18px" width="6" height="9" viewBox="0 0 6 9"><path d="M0.6 0.6 L5.2 4.5 L0.6 8.4Z" fill="#f2f2f2"/></svg><span class="n">Dimension</span></div>
  <div class="drow" style="top:315px"><svg class="a" style="left:33px;top:18px" width="6" height="9" viewBox="0 0 6 9"><path d="M0.6 0.6 L5.2 4.5 L0.6 8.4Z" fill="#f2f2f2"/></svg><span class="n">Background</span></div>
  <div class="drow" style="top:360px"><svg class="a" style="left:33px;top:18px" width="6" height="9" viewBox="0 0 6 9"><path d="M0.6 0.6 L5.2 4.5 L0.6 8.4Z" fill="#f2f2f2"/></svg><span class="n">Effects</span></div>
</div>
<div id="rsb" class="a">
  <div class="a" style="left:0;top:0;width:45px;height:38px;background:#3b3b3b"></div>
  <svg class="a" style="left:0;top:0" width="45" height="38" viewBox="1874 120 45 38">
    <path d="M1905.5 131.1 L1896 141.7" stroke="#f2f2f2" stroke-width="4.6" stroke-linecap="round"/>
    <path d="M1895.5 140 Q1899 143 1897.5 146.5 Q1895.5 149.5 1891.5 148.8 Q1888.5 148 1887.6 144.2 Q1889.5 145 1890.5 143.5 Q1891.5 140.5 1895.5 140Z" fill="#f2f2f2"/>
  </svg>
  <svg class="a" style="left:10px;top:46px" width="24" height="20" viewBox="0 0 24 20">
    <g transform="translate(0.5,3) scale(0.88)"><use href="#cog"/></g>
    <g transform="translate(14.5,0) scale(0.5)"><use href="#cog"/></g>
    <g transform="translate(14.5,10.5) scale(0.5)"><use href="#cog"/></g>
  </svg>
</div>

</body></html>
